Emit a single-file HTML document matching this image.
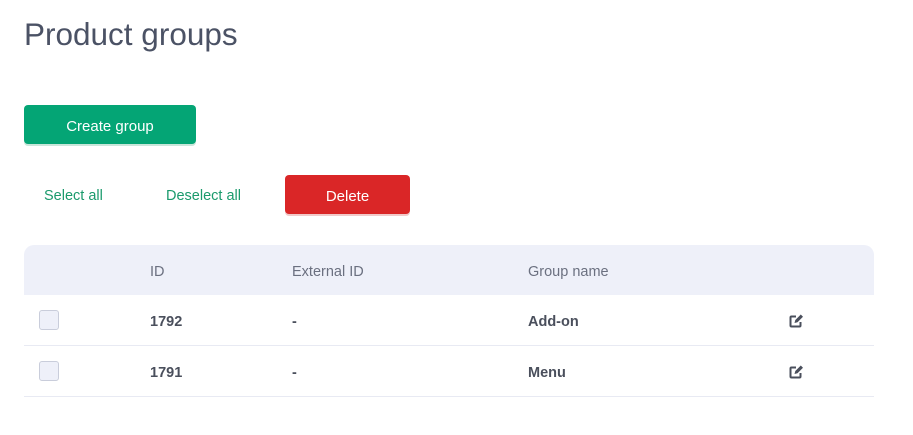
<!DOCTYPE html>
<html><head><style>
body{margin:0;background:#fff;font-family:"Liberation Sans",sans-serif;width:913px;height:435px;position:relative;overflow:hidden;color:#4a4f5c}
.a{position:absolute}
h1{position:absolute;left:24px;top:16px;margin:0;font-weight:normal;font-size:31.5px;color:#4b5265}
.btn{position:absolute;color:#fff;font-size:15px;text-align:center;border-radius:4px}
.link{position:absolute;color:#1a9a6c;font-size:14.5px}
.hd{position:absolute;left:24px;top:245px;width:850px;height:50px;background:#eef0f9;border-radius:10px 10px 0 0}
.th{position:absolute;top:264px;font-size:14.5px;color:#6b7080}
.td{position:absolute;font-size:14.5px;font-weight:bold;color:#4a4f5c}
.line{position:absolute;left:24px;width:850px;height:1px;background:#e8eaf3}
.cb{position:absolute;left:39px;width:20px;height:20px;border:1px solid #c9cddb;background:#eef0f9;border-radius:3px;box-sizing:border-box}
</style></head><body>
<h1>Product groups</h1>
<div class="btn" style="left:24px;top:105px;width:172px;height:39px;line-height:43px;background:#04a575;box-shadow:0 2px 0 #c9e6da">Create group</div>
<div class="link" style="left:44px;top:188px">Select all</div>
<div class="link" style="left:166px;top:188px">Deselect all</div>
<div class="btn" style="left:285px;top:175px;width:125px;height:39px;line-height:43px;background:#da2627;box-shadow:0 2px 0 #f1c9c9">Delete</div>
<div class="hd"></div>
<div class="th" style="left:150px">ID</div>
<div class="th" style="left:292px">External ID</div>
<div class="th" style="left:528px">Group name</div>
<div class="cb" style="top:310px"></div>
<div class="td" style="left:150px;top:314px">1792</div>
<div class="td" style="left:292px;top:314px">-</div>
<div class="td" style="left:528px;top:314px">Add-on</div>
<div class="line" style="top:345px"></div>
<div class="cb" style="top:361px"></div>
<div class="td" style="left:150px;top:365px">1791</div>
<div class="td" style="left:292px;top:365px">-</div>
<div class="td" style="left:528px;top:365px">Menu</div>
<div class="line" style="top:396px"></div>
<svg class="a" style="left:789px;top:313px" width="16" height="15" viewBox="0 0 16 15"><path d="M7 3.5H2.5A1 1 0 0 0 1.5 4.5v8a1 1 0 0 0 1 1h8a1 1 0 0 0 1-1V9" fill="none" stroke="#4a4f5c" stroke-width="2"/><path d="M5.5 10l.8-3 5.5-5.5 2.2 2.2-5.5 5.5z" fill="#4a4f5c"/></svg>
<svg class="a" style="left:789px;top:364px" width="16" height="15" viewBox="0 0 16 15"><path d="M7 3.5H2.5A1 1 0 0 0 1.5 4.5v8a1 1 0 0 0 1 1h8a1 1 0 0 0 1-1V9" fill="none" stroke="#4a4f5c" stroke-width="2"/><path d="M5.5 10l.8-3 5.5-5.5 2.2 2.2-5.5 5.5z" fill="#4a4f5c"/></svg>
</body></html>
